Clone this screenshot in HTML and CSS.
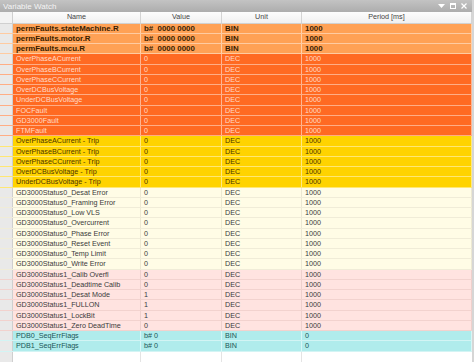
FILE: index.html
```html
<!DOCTYPE html>
<html lang="en">
<head>
  <meta charset="UTF-8">
  <title>Variable Watch</title>
  <link rel="stylesheet" href="styles.css">
</head>
<body>
  <div class="panel">
    <div class="titlebar">
      <span class="title">Variable Watch</span>
      <div class="tools">
        <svg width="7" height="5" viewBox="0 0 7 5"><path d="M0 0h7L3.5 4z" fill="#fff"/></svg>
        <svg width="6" height="6" viewBox="0 0 6 6"><rect x="0.5" y="0.5" width="5" height="5" fill="none" stroke="#fff"/><rect x="0.5" y="0.5" width="5" height="1.5" fill="#fff"/></svg>
        <svg width="6" height="6" viewBox="0 0 6 6"><path d="M0.5 0.5l5 5M5.5 0.5l-5 5" stroke="#fff" stroke-width="1.2"/></svg>
      </div>
    </div>

    <div class="grid">
      <div class="row head">
        <div class="gut"></div><div>Name</div><div>Value</div><div>Unit</div><div>Period [ms]</div>
      </div>

      <div class="row perm"><div class="gut"></div><div>permFaults.stateMachine.R</div><div>b#  0000 0000</div><div>BIN</div><div>1000</div></div>
      <div class="row perm"><div class="gut"></div><div>permFaults.motor.R</div><div>b#  0000 0000</div><div>BIN</div><div>1000</div></div>
      <div class="row perm"><div class="gut"></div><div>permFaults.mcu.R</div><div>b#  0000 0000</div><div>BIN</div><div>1000</div></div>

      <div class="row fault"><div class="gut"></div><div>OverPhaseACurrent</div><div>0</div><div>DEC</div><div>1000</div></div>
      <div class="row fault"><div class="gut"></div><div>OverPhaseBCurrent</div><div>0</div><div>DEC</div><div>1000</div></div>
      <div class="row fault"><div class="gut"></div><div>OverPhaseCCurrent</div><div>0</div><div>DEC</div><div>1000</div></div>
      <div class="row fault"><div class="gut"></div><div>OverDCBusVoltage</div><div>0</div><div>DEC</div><div>1000</div></div>
      <div class="row fault"><div class="gut"></div><div>UnderDCBusVoltage</div><div>0</div><div>DEC</div><div>1000</div></div>
      <div class="row fault"><div class="gut"></div><div>FOCFault</div><div>0</div><div>DEC</div><div>1000</div></div>
      <div class="row fault"><div class="gut"></div><div>GD3000Fault</div><div>0</div><div>DEC</div><div>1000</div></div>
      <div class="row fault"><div class="gut"></div><div>FTMFault</div><div>0</div><div>DEC</div><div>1000</div></div>

      <div class="row trip"><div class="gut"></div><div>OverPhaseACurrent - Trip</div><div>0</div><div>DEC</div><div>1000</div></div>
      <div class="row trip"><div class="gut"></div><div>OverPhaseBCurrent - Trip</div><div>0</div><div>DEC</div><div>1000</div></div>
      <div class="row trip"><div class="gut"></div><div>OverPhaseCCurrent - Trip</div><div>0</div><div>DEC</div><div>1000</div></div>
      <div class="row trip"><div class="gut"></div><div>OverDCBusVoltage - Trip</div><div>0</div><div>DEC</div><div>1000</div></div>
      <div class="row trip"><div class="gut"></div><div>UnderDCBusVoltage - Trip</div><div>0</div><div>DEC</div><div>1000</div></div>

      <div class="row st0"><div class="gut"></div><div>GD3000Status0_Desat Error</div><div>0</div><div>DEC</div><div>1000</div></div>
      <div class="row st0"><div class="gut"></div><div>GD3000Status0_Framing Error</div><div>0</div><div>DEC</div><div>1000</div></div>
      <div class="row st0"><div class="gut"></div><div>GD3000Status0_Low VLS</div><div>0</div><div>DEC</div><div>1000</div></div>
      <div class="row st0"><div class="gut"></div><div>GD3000Status0_Overcurrent</div><div>0</div><div>DEC</div><div>1000</div></div>
      <div class="row st0"><div class="gut"></div><div>GD3000Status0_Phase Error</div><div>0</div><div>DEC</div><div>1000</div></div>
      <div class="row st0"><div class="gut"></div><div>GD3000Status0_Reset Event</div><div>0</div><div>DEC</div><div>1000</div></div>
      <div class="row st0"><div class="gut"></div><div>GD3000Status0_Temp Limit</div><div>0</div><div>DEC</div><div>1000</div></div>
      <div class="row st0"><div class="gut"></div><div>GD3000Status0_Write Error</div><div>0</div><div>DEC</div><div>1000</div></div>

      <div class="row st1"><div class="gut"></div><div>GD3000Status1_Calib Overfl</div><div>0</div><div>DEC</div><div>1000</div></div>
      <div class="row st1"><div class="gut"></div><div>GD3000Status1_Deadtime Calib</div><div>0</div><div>DEC</div><div>1000</div></div>
      <div class="row st1"><div class="gut"></div><div>GD3000Status1_Desat Mode</div><div>1</div><div>DEC</div><div>1000</div></div>
      <div class="row st1"><div class="gut"></div><div>GD3000Status1_FULLON</div><div>1</div><div>DEC</div><div>1000</div></div>
      <div class="row st1"><div class="gut"></div><div>GD3000Status1_LockBit</div><div>1</div><div>DEC</div><div>1000</div></div>
      <div class="row st1"><div class="gut"></div><div>GD3000Status1_Zero DeadTime</div><div>0</div><div>DEC</div><div>1000</div></div>

      <div class="row pdb"><div class="gut"></div><div>PDB0_SeqErrFlags</div><div>b# 0</div><div>BIN</div><div>0</div></div>
      <div class="row pdb"><div class="gut"></div><div>PDB1_SeqErrFlags</div><div>b# 0</div><div>BIN</div><div>0</div></div>

      <div class="row filler"><div class="gut"></div><div></div><div></div><div></div><div></div></div>
    </div>
  </div>
</body>
</html>
```

FILE: styles.css
```css
body {
  margin: 0;
  font-family: "Liberation Sans", Arial, sans-serif;
  font-size: 7.2px;
  background: #fff;
}
.panel {
  width: 474px;
  height: 362px;
  display: flex;
  flex-direction: column;
  overflow: hidden;
  border-right: 2px solid #d6d6d6;
  box-sizing: border-box;
}
.titlebar {
  height: 12px;
  flex: none;
  display: flex;
  align-items: center;
  justify-content: space-between;
  padding: 0 5px 0 3px;
  background: linear-gradient(#c3c3c3, #adadad);
  color: #f4f4f4;
  font-size: 8px;
}
.tools {
  display: flex;
  align-items: center;
  gap: 5px;
}
.grid {
  flex: 1;
  display: flex;
  flex-direction: column;
  min-height: 0;
}
.row {
  display: grid;
  grid-template-columns: 13px 128px 81px 80px 1fr;
  flex: none;
  height: 10.25px;
  min-height: 0;
  line-height: 9.25px;
  overflow: hidden;
  box-sizing: border-box;
  border-bottom: 1px solid rgba(255,255,255,0.45);
}
.row > div {
  padding-left: 3px;
  white-space: pre;
  overflow: hidden;
  border-right: 1px solid rgba(255,255,255,0.5);
}
.row > .gut {
  padding: 0;
  background: #e9e9e9;
  border-right: 1px solid #cfcfcf;
}
.head {
  height: 11.5px;
  line-height: 10.5px;
  background: linear-gradient(#fdfdfd, #f0f0f0);
  color: #444;
  border-bottom: 1px solid #d0d0d0;
}
.head > div {
  text-align: center;
  padding-left: 0;
  border-right: 1px solid #d4d4d4;
}
.head > .gut {
  background: #f3f3f3;
}
.perm {
  background: #ffa155;
  color: #3a1d00;
  font-weight: bold;
  font-size: 7.9px;
}
.fault {
  background: #ff6a22;
  color: #ffdcc8;
}
.trip {
  background: #ffd300;
  color: #4d3300;
}
.st0 {
  background: #fffce6;
  color: #3a3a3a;
  border-bottom-color: #f0ecd8;
}
.st0 > div { border-right-color: #ece8d2; }
.st1 {
  background: #ffe3e0;
  color: #3a3a3a;
  border-bottom-color: #f2d2ce;
}
.st1 > div { border-right-color: #eed0cc; }
.pdb {
  background: #b0ecec;
  color: #1c5656;
}
.filler {
  flex: 1;
  height: auto;
  border-bottom: none;
}
.filler > div {
  border-right-color: #e4e4e4;
}
.filler > div:last-child {
  border-right: none;
}
```
